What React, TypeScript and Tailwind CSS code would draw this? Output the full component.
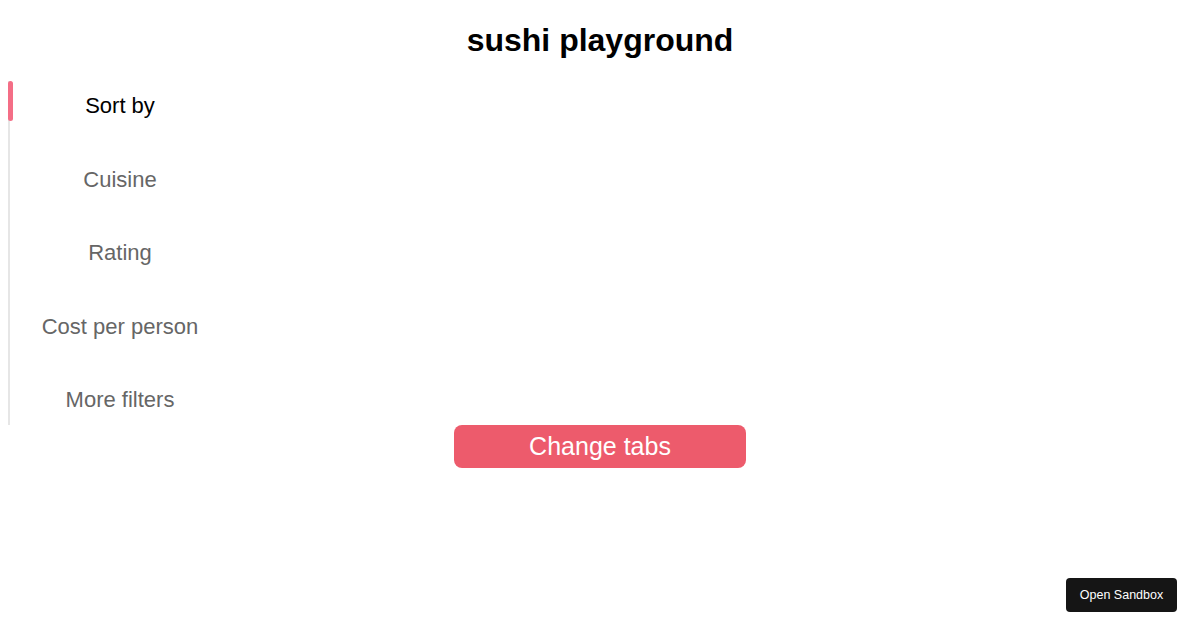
import React, { useState } from "react";

const tabs = ["Sort by", "Cuisine", "Rating", "Cost per person", "More filters"];

export default function App() {
  const [active, setActive] = useState(0);
  return (
    <div className="min-h-[630px] bg-white px-2 pt-[16px] font-['Liberation_Sans',Arial,sans-serif]">
      <h1 className="text-center text-[32px] font-bold leading-[48px] text-black">sushi playground</h1>
      <div className="relative mt-[17px] flex w-[222px] flex-col gap-6 border-l-2 border-[#e6e6e6]">
        <div
          className="absolute left-[-2px] w-[5px] rounded-full bg-[#f46e86]"
          style={{ top: active * 73.5, height: 40 }}
        />
        {tabs.map((t, i) => (
          <button
            key={t}
            onClick={() => setActive(i)}
            className={`flex h-[49.5px] items-center justify-center text-[22px] ${
              i === active ? "text-black" : "text-[#666666]"
            }`}
          >
            {t}
          </button>
        ))}
      </div>
      <div className="flex justify-center">
        <button
          onClick={() => setActive((active + 1) % tabs.length)}
          className="h-[43px] w-[292px] rounded-lg bg-[#ed5b6c] pt-px text-[25px] text-white"
        >
          Change tabs
        </button>
      </div>
      <div className="fixed bottom-[18px] right-[23px] flex h-[34px] w-[111px] items-center justify-center rounded bg-[#151515] text-[12.5px] text-white">
        Open Sandbox
      </div>
    </div>
  );
}
